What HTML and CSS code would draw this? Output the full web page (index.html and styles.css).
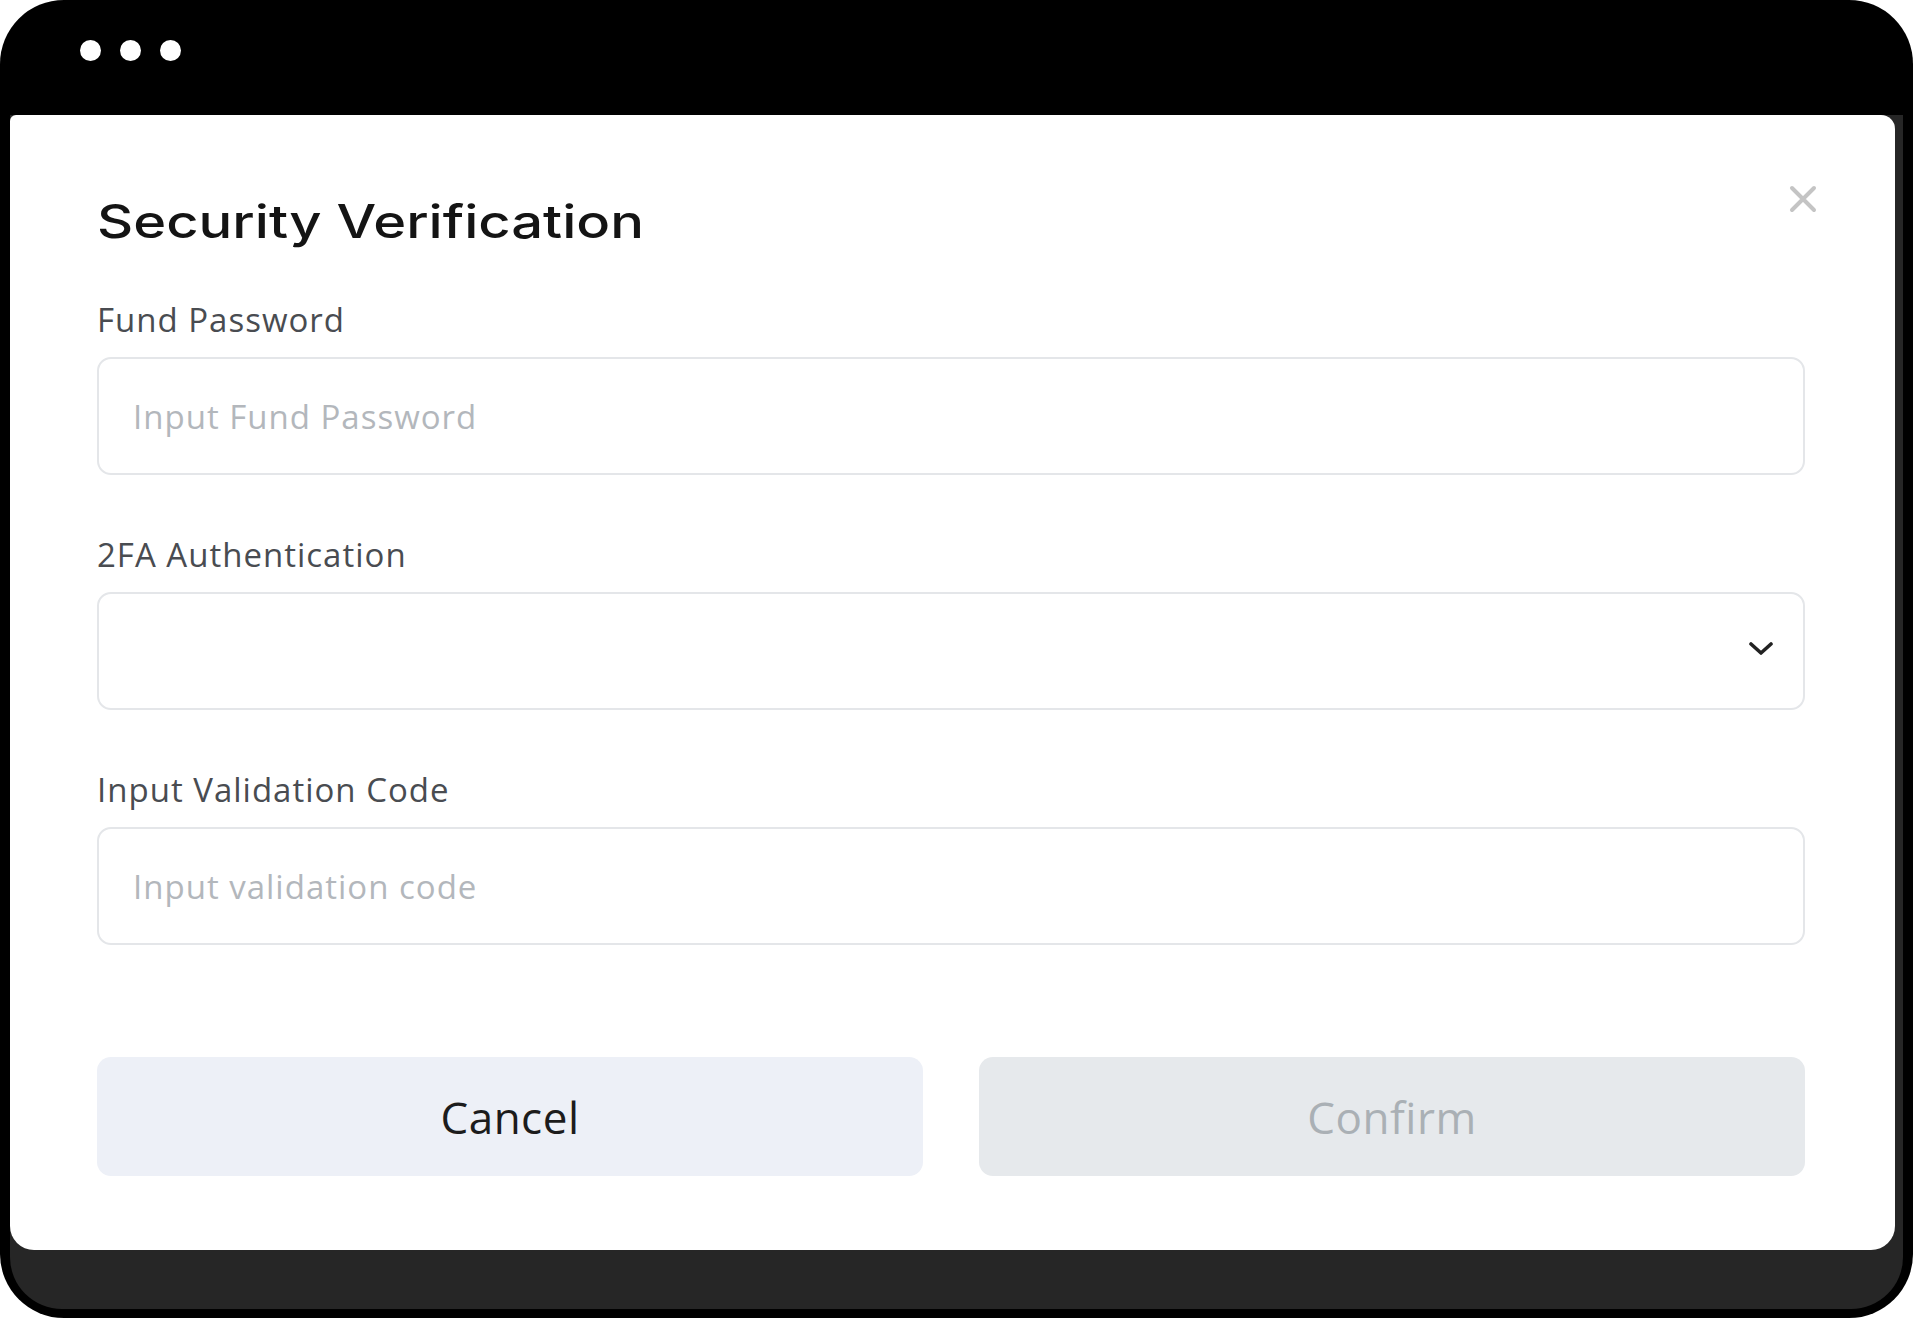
FILE: index.html
```html
<!DOCTYPE html>
<html lang="en">
<head>
  <meta charset="UTF-8">
  <meta name="viewport" content="width=device-width, initial-scale=1.0">
  <title>Security Verification</title>
  <link rel="stylesheet" href="styles.css">
</head>
<body>

  <!-- Janela do navegador -->
  <div class="window">
    <div class="titlebar">
      <span class="dot"></span>
      <span class="dot"></span>
      <span class="dot"></span>
    </div>

    <div class="viewport">
      <!-- Modal de verificação -->
      <div class="modal">
        <button class="close-btn" aria-label="Close">
          <svg width="28" height="28" viewBox="0 0 28 28">
            <path d="M3 3 L25 25 M25 3 L3 25" stroke="#c4c4c4" stroke-width="4" stroke-linecap="round" fill="none"/>
          </svg>
        </button>

        <h1 class="modal-title">Security Verification</h1>

        <div class="fields">
          <div class="field">
            <label class="field-label">Fund Password</label>
            <input class="field-input" type="password" placeholder="Input Fund Password">
          </div>

          <div class="field">
            <label class="field-label">2FA Authentication</label>
            <div class="field-input select">
              <svg class="chevron" width="26" height="14" viewBox="0 0 26 14">
                <path d="M3 2 L13 11 L23 2" stroke="#222" stroke-width="3.6" stroke-linecap="round" stroke-linejoin="round" fill="none"/>
              </svg>
            </div>
          </div>

          <div class="field">
            <label class="field-label">Input Validation Code</label>
            <input class="field-input" type="text" placeholder="Input validation code">
          </div>
        </div>

        <div class="actions">
          <button class="btn btn-cancel">Cancel</button>
          <button class="btn btn-confirm" disabled>Confirm</button>
        </div>
      </div>
    </div>
  </div>

</body>
</html>
```

FILE: styles.css
```css
/* Moldura escura da janela com o modal por cima */
body {
  margin: 0;
  padding: 0;
  background-color: #fff;
  font-family: "Open Sans", Arial, sans-serif;
}

.window {
  width: 1913px;
  height: 1318px;
  box-sizing: border-box;
  background-color: #000;
  border-radius: 64px;
  padding: 0 10px 9px 10px;
  display: flex;
  flex-direction: column;
}

.titlebar {
  height: 115px;
  flex-shrink: 0;
  display: flex;
  align-items: center;
  gap: 19px;
  padding-left: 70px;
  padding-bottom: 15px;
  box-sizing: border-box;
}

.dot {
  width: 21px;
  height: 21px;
  border-radius: 50%;
  background-color: #fff;
}

.viewport {
  flex: 1;
  background-color: #262626;
  border-radius: 0 0 52px 52px;
  padding-right: 8px;
}

.modal {
  position: relative;
  height: 1135px;
  box-sizing: border-box;
  background-color: #fff;
  border-radius: 6px 14px 24px 24px;
  padding: 78px 90px 0 87px;
}

.close-btn {
  position: absolute;
  top: 70px;
  right: 78px;
  padding: 0;
  border: none;
  background: none;
  cursor: pointer;
  line-height: 0;
}

/* título largo, esticado na horizontal */
.modal-title {
  display: inline-block;
  margin: 0;
  font-family: Inter, "Liberation Sans", sans-serif;
  font-size: 46px;
  font-weight: 500;
  line-height: 56px;
  color: #141414;
  transform: scaleX(1.22);
  transform-origin: left center;
}

.fields {
  margin-top: 49px;
  display: flex;
  flex-direction: column;
  gap: 58px;
}

.field {
  display: flex;
  flex-direction: column;
  gap: 15px;
}

.field-label {
  font-size: 33px;
  line-height: 44px;
  letter-spacing: 1px;
  color: #494c51;
}

.field-input {
  height: 118px;
  box-sizing: border-box;
  border: 2px solid #e4e6e9;
  border-radius: 14px;
  padding: 0 34px;
  font-family: "Open Sans", Arial, sans-serif;
  font-size: 33px;
  letter-spacing: 1px;
  color: #222;
  background-color: #fff;
  outline: none;
}

.field-input::placeholder {
  color: #b3b7bc;
}

.select {
  display: flex;
  align-items: center;
  justify-content: flex-end;
  padding-right: 29px;
  padding-bottom: 4px;
}

.actions {
  margin-top: 112px;
  display: flex;
  gap: 56px;
}

.btn {
  flex: 1;
  height: 119px;
  border: none;
  border-radius: 14px;
  font-family: "Open Sans", Arial, sans-serif;
  font-size: 44px;
  letter-spacing: 0.5px;
  cursor: pointer;
}

.btn-cancel {
  background-color: #edf0f7;
  color: #1c1c1c;
}

.btn-confirm {
  background-color: #e6e9ec;
  color: #aab0b5;
  cursor: default;
}
```
